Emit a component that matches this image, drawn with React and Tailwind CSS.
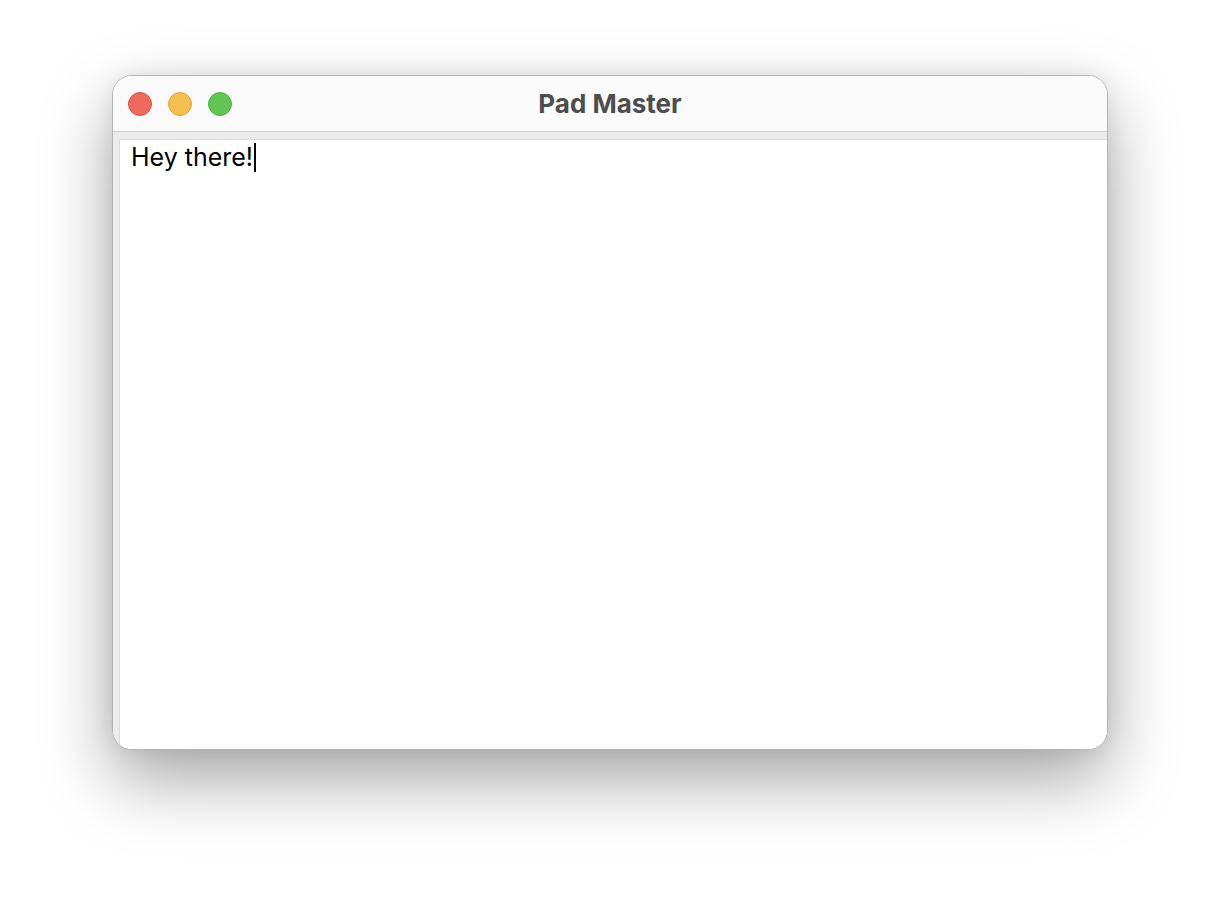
export default function App() {
  return (
    <div
      className="w-[1220px] h-[898px] bg-white pt-[75px] pl-[112px]"
      style={{ fontFamily: 'Inter, "Liberation Sans", Arial, sans-serif' }}
    >
      {/* WINDOW */}
      <div className="w-[996px] h-[675px] rounded-[20px] border border-[#b4b4b4] bg-white overflow-hidden flex flex-col shadow-[0_30px_70px_rgba(0,0,0,0.35),0_0_20px_rgba(0,0,0,0.08)]">
        {/* TITLE BAR */}
        <div className="h-[56px] bg-[#fafafa] border-b border-[#d2d2d2] flex items-center relative">
          <div className="flex items-center gap-[16px] pl-[15px]">
            <div className="w-[24px] h-[24px] rounded-full bg-[#ed6a5e] border border-[#d5544a]" />
            <div className="w-[24px] h-[24px] rounded-full bg-[#f5bf4f] border border-[#d9a23e]" />
            <div className="w-[24px] h-[24px] rounded-full bg-[#61c554] border border-[#4fae43]" />
          </div>
          <div className="absolute inset-0 flex items-center justify-center text-[26px] font-bold text-[#4d4d4d]">
            Pad Master
          </div>
        </div>

        {/* EDITOR */}
        <div className="flex-1 bg-[#ececec] pt-[7px] pl-[6px] flex">
          <div className="flex-1 bg-white border-t border-l border-[#dcdcdc] pl-[11px] pt-[2px]">
            <div className="flex items-center text-[25px] text-black leading-[30px]">
              <span>Hey there!</span>
              <span className="w-[2px] h-[29px] bg-black ml-[1px]" />
            </div>
          </div>
        </div>
      </div>
    </div>
  );
}
